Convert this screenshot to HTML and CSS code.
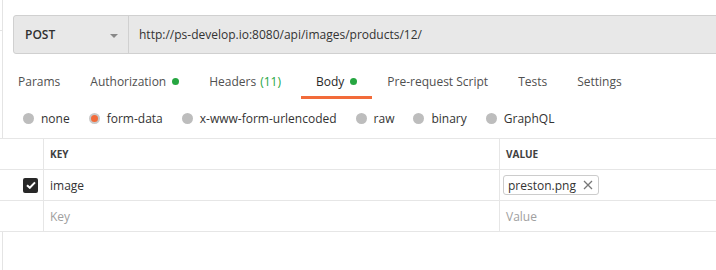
FILE: index.html
```html
<!DOCTYPE html>
<html lang="en">
<head>
    <meta charset="UTF-8">
    <title>Request Builder</title>
    <link rel="stylesheet" href="styles.css">
</head>
<body>
    <div class="panel">
        <div class="url-bar">
            <div class="method">
                <span>POST</span>
                <span class="caret"></span>
            </div>
            <div class="url">http://ps-develop.io:8080/api/images/products/12/</div>
        </div>

        <div class="tabs">
            <div class="tab">Params</div>
            <div class="tab">Authorization <span class="dot"></span></div>
            <div class="tab">Headers <span class="count">(11)</span></div>
            <div class="tab active">Body <span class="dot"></span></div>
            <div class="tab">Pre-request Script</div>
            <div class="tab">Tests</div>
            <div class="tab">Settings</div>
        </div>

        <div class="body-types">
            <label class="radio"><span class="circle"></span>none</label>
            <label class="radio checked"><span class="circle"></span>form-data</label>
            <label class="radio"><span class="circle"></span>x-www-form-urlencoded</label>
            <label class="radio"><span class="circle"></span>raw</label>
            <label class="radio"><span class="circle"></span>binary</label>
            <label class="radio"><span class="circle"></span>GraphQL</label>
        </div>

        <div class="kv-table">
            <div class="cell"></div>
            <div class="cell head">KEY</div>
            <div class="cell head">VALUE</div>

            <div class="cell check-cell">
                <span class="checkbox">
                    <svg width="10" height="8" viewBox="0 0 10 8"><path d="M1 4.2 L3.8 6.8 L9 1.4" fill="none" stroke="#fff" stroke-width="2"/></svg>
                </span>
            </div>
            <div class="cell">image</div>
            <div class="cell">
                <span class="file-pill">preston.png
                    <svg width="10" height="10" viewBox="0 0 10 10"><path d="M1 1 L9 9 M9 1 L1 9" stroke="#777" stroke-width="1.3"/></svg>
                </span>
            </div>

            <div class="cell"></div>
            <div class="cell placeholder">Key</div>
            <div class="cell placeholder">Value</div>
        </div>
    </div>
</body>
</html>
```

FILE: styles.css
```css
body {
    margin: 0;
    font-family: "Open Sans", Arial, sans-serif;
    font-size: 12px;
    color: #333;
    background: #fff linear-gradient(#e4e4e4, #e4e4e4) no-repeat 0 30px / 2px 1px;
    overflow: hidden;
}
.panel {
    box-sizing: border-box;
    margin-left: 2px;
    padding-top: 15px;
    border-left: 1px solid #e4e4e4;
    height: 270px;
}
.url-bar {
    display: flex;
    height: 37px;
    margin: 0 -4px 0 10px;
    border: 1px solid #d0d0d0;
    border-radius: 3px;
    background-color: #e8e8e8;
}
.method {
    display: flex;
    align-items: center;
    justify-content: space-between;
    width: 93px;
    padding: 0 10px 0 11px;
    border-right: 1px solid #d0d0d0;
    font-weight: 600;
    color: #303030;
}
.caret {
    width: 0;
    height: 0;
    border-left: 4px solid transparent;
    border-right: 4px solid transparent;
    border-top: 4px solid #888;
    margin-top: 2px;
}
.url {
    display: flex;
    align-items: center;
    padding-left: 10px;
    color: #333;
}
.tabs {
    display: flex;
    height: 32px;
    margin-top: 13px;
}
.tab {
    display: flex;
    align-items: center;
    gap: 6px;
    padding: 0 15px;
    color: #505050;
    border-bottom: 3px solid transparent;
}
.tab.active {
    color: #282828;
    border-bottom-color: #f26b3a;
}
.dot {
    width: 7px;
    height: 7px;
    border-radius: 50%;
    background-color: #26a641;
}
.count {
    margin-left: -2px;
    margin-right: 5px;
    color: #26a641;
}
.body-types {
    display: flex;
    align-items: center;
    height: 39px;
    padding-left: 20px;
    gap: 19px;
}
.radio {
    display: flex;
    align-items: center;
    gap: 7px;
    color: #333;
}
.circle {
    box-sizing: border-box;
    width: 11px;
    height: 11px;
    border-radius: 50%;
    background-color: #bdbdbd;
}
.radio.checked .circle {
    border: 2px solid #c9c9c9;
    background-color: #f26b3a;
}
.kv-table {
    display: grid;
    grid-template-columns: 44px 456px 1fr;
    grid-auto-rows: 31px;
    margin-left: -3px;
    border-top: 1px solid #e6e6e6;
    background-color: #fff;
}
.cell {
    display: flex;
    align-items: center;
    padding-left: 6px;
    border-bottom: 1px solid #e6e6e6;
    border-right: 1px solid #e6e6e6;
}
.cell:nth-child(3n) {
    border-right: none;
}
.head {
    font-size: 10px;
    font-weight: 700;
    color: #404040;
}
.check-cell {
    padding-left: 23px;
}
.checkbox {
    display: flex;
    align-items: center;
    justify-content: center;
    width: 15px;
    height: 15px;
    border-radius: 2px;
    background-color: #282828;
}
.file-pill {
    display: flex;
    align-items: center;
    gap: 7px;
    height: 18px;
    padding: 0 5px 0 4px;
    margin-left: -3px;
    border: 1px solid #ccc;
    border-radius: 3px;
    color: #333;
}
.placeholder {
    color: #a0a0a0;
}
```
